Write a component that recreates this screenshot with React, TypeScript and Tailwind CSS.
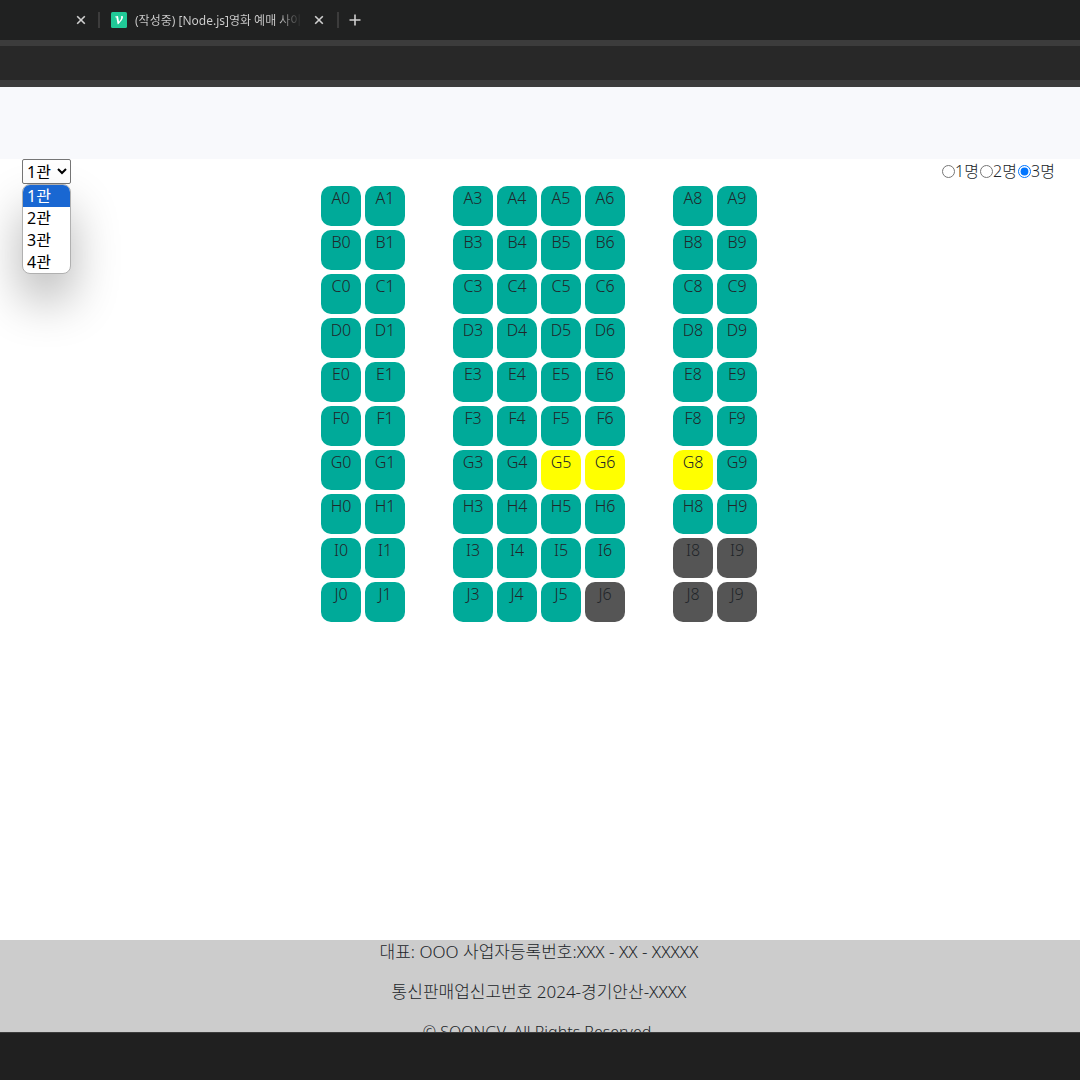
import { useState } from "react";
import clsx from "clsx";

const theaters = ["1관", "2관", "3관", "4관"];
const people = [1, 2, 3];
const rows = ["A", "B", "C", "D", "E", "F", "G", "H", "I", "J"];
const cols = [0, 1, 2, 3, 4, 5, 6, 7, 8, 9];
const aisles = [2, 7];
const reserved = ["I8", "I9", "J6", "J8", "J9"];

function CloseIcon() {
  return (
    <svg width="10" height="10" viewBox="0 0 10 10" stroke="#d0d0d0" strokeWidth="1.6">
      <path d="M1.2 1.2 8.8 8.8M8.8 1.2 1.2 8.8" />
    </svg>
  );
}

function TabBar() {
  return (
    <div className="flex h-10 items-center bg-[#202121] pl-19">
      <button type="button" aria-label="탭 닫기">
        <CloseIcon />
      </button>
      <div className="ml-3 h-4 w-0.5 bg-[#3c3c3c]" />
      <svg className="ml-[11px] shrink-0" width="16" height="16" viewBox="0 0 16 16">
        <rect width="16" height="16" rx="1.5" fill="#20c997" />
        <path
          fill="#fff"
          d="M4.2 4.6 7 4l1 5.7c1.4-1.6 2.2-2.9 2.2-3.9 0-.5-.3-.8-.3-1.1 0-.5.4-.8 1-.8.7 0 1.100.5 1.100 1.200 0 1.700-1.800 4.300-4.700 7.100H6.600L5.400 5.500l-1.200-.2z"
        />
      </svg>
      <div className="ml-2 w-[167px] overflow-hidden whitespace-nowrap bg-linear-to-r from-[#d0d0d0] from-85% to-transparent bg-clip-text pt-0.5 text-xs leading-4 font-normal text-transparent">
        (작성중) [Node.js]영화 예매 사이트
      </div>
      <button type="button" aria-label="탭 닫기" className="ml-3">
        <CloseIcon />
      </button>
      <div className="ml-[13px] h-4 w-0.5 bg-[#3c3c3c]" />
      <button type="button" aria-label="새 탭" className="ml-2.5">
        <svg width="12" height="12" viewBox="0 0 12 12" stroke="#d0d0d0" strokeWidth="1.6">
          <path d="M6 .5v11M.5 6h11" />
        </svg>
      </button>
    </div>
  );
}

export default function App() {
  const [theater, setTheater] = useState("1관");
  const [count, setCount] = useState(3);
  const [selected, setSelected] = useState(["G5", "G6", "G8"]);

  const toggleSeat = (seat: string) => {
    if (selected.includes(seat)) {
      setSelected(selected.filter((s) => s !== seat));
    } else if (selected.length < count) {
      setSelected([...selected, seat]);
    }
  };

  return (
    <div className="flex h-screen flex-col bg-white font-['Noto_Sans','Noto_Sans_CJK_KR',sans-serif] text-base font-light text-[#212529]">
      <TabBar />
      <div className="h-[47px] shrink-0 border-t-6 border-b-7 border-[#3c3c3c] bg-[#282828]" />
      <header className="h-18 shrink-0 bg-[#f8f9fc]" />

      <main className="min-h-0 flex-1">
        <div className="flex items-start justify-between pr-6 pl-[22px]">
          <div className="relative">
            <select
              aria-label="상영관"
              value={theater}
              onChange={(e) => setTheater(e.target.value)}
              className="block h-[25px] w-[49px] appearance-none rounded-xs border border-[#767676] bg-white pl-1 leading-5 font-normal text-black"
            >
              {theaters.map((name) => (
                <option key={name}>{name}</option>
              ))}
            </select>
            <svg
              className="pointer-events-none absolute top-2 right-1"
              width="10"
              height="8"
              viewBox="0 0 10 8"
              fill="none"
              stroke="#000"
              strokeWidth="2"
            >
              <path d="M1 2l4 4 4-4" />
            </svg>
            <ul
              role="listbox"
              aria-label="상영관 목록"
              className="absolute top-full left-0 w-[49px] overflow-hidden rounded-lg border border-[#b0b0b0] bg-white font-normal text-black shadow-[0_26px_48px_rgba(0,0,0,0.3)]"
            >
              {theaters.map((name) => (
                <li
                  key={name}
                  role="option"
                  aria-selected={name === theater}
                  onClick={() => setTheater(name)}
                  className={clsx(
                    "h-[22px] pl-1 leading-[22px]",
                    name === theater && "bg-[#1967d2] text-white",
                  )}
                >
                  {name}
                </li>
              ))}
            </ul>
          </div>

          <div className="flex">
            {people.map((n) => (
              <label key={n} className="flex w-[38px] items-center leading-6">
                <input
                  type="radio"
                  name="people"
                  checked={count === n}
                  onChange={() => setCount(n)}
                  className="size-[13px] accent-[#0075ff]"
                />
                {n}명
              </label>
            ))}
          </div>
        </div>

        <div className="flex flex-col items-center gap-1 pt-0.5 pr-0.5">
          {rows.map((row) => (
            <div key={row} className="flex gap-1">
              {cols.map((col) => {
                const seat = row + col;
                if (aisles.includes(col)) return <div key={seat} className="size-10" />;
                return (
                  <button
                    key={seat}
                    type="button"
                    disabled={reserved.includes(seat)}
                    onClick={() => toggleSeat(seat)}
                    className={clsx(
                      "flex size-10 items-start justify-center rounded-[10px] leading-6",
                      reserved.includes(seat)
                        ? "bg-[#555555]"
                        : selected.includes(seat)
                          ? "bg-[#ffff00]"
                          : "bg-[#00aa99]",
                    )}
                  >
                    {seat}
                  </button>
                );
              })}
            </div>
          ))}
        </div>
      </main>

      <footer className="flex h-23 shrink-0 flex-col gap-4 overflow-hidden bg-[#cccccc] pr-0.5 text-center leading-6">
        <p className="text-[17px] leading-6">대표: OOO 사업자등록번호:XXX - XX - XXXXX</p>
        <p className="text-[17px] leading-6">통신판매업신고번호 2024-경기안산-XXXX</p>
        <p>© SOONGV. All Rights Reserved.</p>
      </footer>
      <div className="h-12 shrink-0 border-t border-[#3c3c3c] bg-[#202020]" />
    </div>
  );
}
